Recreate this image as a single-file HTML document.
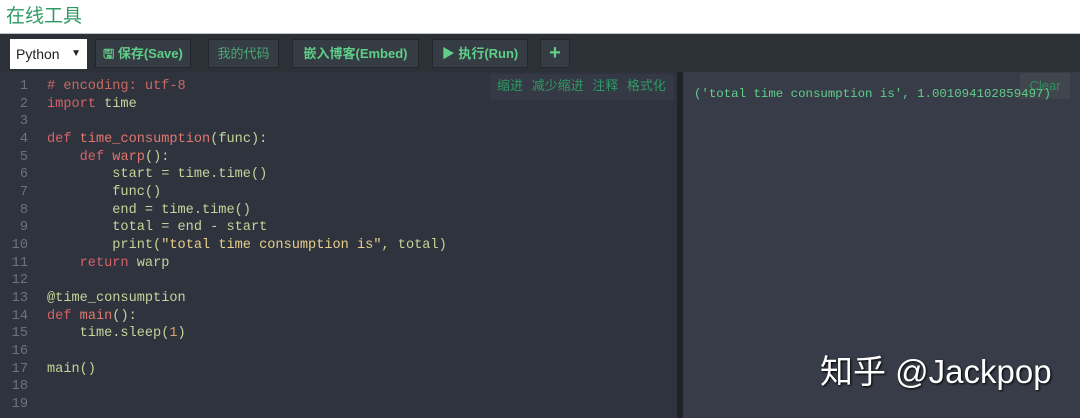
<!DOCTYPE html>
<html><head><meta charset="utf-8"><style>
*{margin:0;padding:0;box-sizing:border-box}
body{width:1080px;height:418px;overflow:hidden;background:#fff;font-family:"Liberation Sans","Noto Sans CJK SC",sans-serif;position:relative}
.title{position:absolute;left:6px;top:1px;font-size:19px;color:#2f9a63}
.bar{position:absolute;left:0;top:33px;width:1080px;height:39px;background:#2c3138;border-top:1px solid #bfc3c8}
.btn{position:absolute;top:5px;height:29px;background:#363c44;border:1px solid #23272c;color:#5fcf88;font-size:13px;font-weight:bold;line-height:27px;text-align:center}
.sel{position:absolute;left:10px;top:5px;width:77px;height:30px;background:#fff;color:#222;font-size:14px;line-height:30px;padding-left:6px}
.ed{position:absolute;left:0;top:72px;width:677px;height:346px;background:#2e333d}
.div{position:absolute;left:677px;top:72px;width:6px;height:346px;background:#1f2328}
.out{position:absolute;left:683px;top:72px;width:397px;height:346px;background:#383c48}
.code{position:absolute;left:0;top:78px;font-family:"Liberation Mono",monospace;font-size:13.6px;line-height:17.65px;color:#c5d49a;white-space:pre}
.ln{display:inline-block;width:28px;text-align:right;color:#6c7280;margin-right:19px}
.k{color:#d46369}.f{color:#e0776e}.s{color:#e8cf8a}.c{color:#c86a66}.n{color:#e0a36e}
.tools{position:absolute;left:490px;top:74px;width:184px;height:26px;background:#343945;border-radius:3px;color:#2f9a63;font-size:13px;line-height:24px;padding-left:7px;word-spacing:5px;white-space:nowrap}
.res{position:absolute;left:694px;top:87px;font-family:"Liberation Mono",monospace;font-size:12.4px;color:#5fcf88}
.clear{position:absolute;left:1020px;top:73px;width:50px;height:26px;background:#41464f;color:#2f9a63;font-size:13px;line-height:26px;text-align:center;opacity:.9}
.wm{position:absolute;left:820px;top:345px;font-size:33px;color:#fff;text-shadow:1px 1px 2px #000}
</style></head><body>
<div class="title">在线工具</div>
<div class="bar">
<div class="sel">Python <span style="font-size:10px;position:absolute;right:6px">▼</span></div>
<div class="btn" style="left:95px;width:96px">🖫 保存(Save)</div>
<div class="btn" style="left:208px;width:71px;color:#4aa876;font-weight:normal">我的代码</div>
<div class="btn" style="left:292px;width:127px">嵌入博客(Embed)</div>
<div class="btn" style="left:432px;width:96px">▶ 执行(Run)</div>
<div class="btn" style="left:540px;width:30px;font-size:20px">+</div>
</div>
<div class="ed"></div><div class="div"></div><div class="out"></div>
<div class="code"><span class="ln">1</span><span class="c"># encoding: utf-8</span>
<span class="ln">2</span><span class="k">import</span> time
<span class="ln">3</span>
<span class="ln">4</span><span class="k">def</span> <span class="f">time_consumption</span>(func):
<span class="ln">5</span>    <span class="k">def</span> <span class="f">warp</span>():
<span class="ln">6</span>        start = time.time()
<span class="ln">7</span>        func()
<span class="ln">8</span>        end = time.time()
<span class="ln">9</span>        total = end - start
<span class="ln">10</span>        print(<span class="s">"total time consumption is"</span>, total)
<span class="ln">11</span>    <span class="k">return</span> warp
<span class="ln">12</span>
<span class="ln">13</span>@time_consumption
<span class="ln">14</span><span class="k">def</span> <span class="f">main</span>():
<span class="ln">15</span>    time.sleep(<span class="n">1</span>)
<span class="ln">16</span>
<span class="ln">17</span>main()
<span class="ln">18</span>
<span class="ln">19</span></div>
<div class="tools">缩进 减少缩进 注释 格式化</div>
<div class="clear">Clear</div>
<div class="res">('total time consumption is', 1.001094102859497)</div>
<div class="wm">知乎 @Jackpop</div>
</body></html>
